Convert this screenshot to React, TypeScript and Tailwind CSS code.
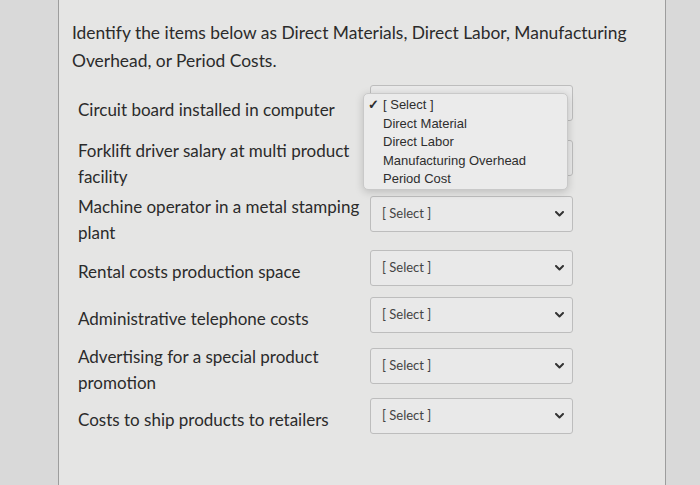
import React from "react";

const rows: { label: string[]; h: number; mt: number }[] = [
  { label: ["Circuit board installed in computer"], h: 55, mt: 12 },
  { label: ["Forklift driver salary at multi product", "facility"], h: 56, mt: -2 },
  { label: ["Machine operator in a metal stamping", "plant"], h: 54, mt: -2 },
  { label: ["Rental costs production space"], h: 47, mt: 9 },
  { label: ["Administrative telephone costs"], h: 51, mt: 9 },
  { label: ["Advertising for a special product", "promotion"], h: 50, mt: -4 },
  { label: ["Costs to ship products to retailers"], h: 40, mt: 9 },
];

function Chevron() {
  return (
    <svg width="9" height="6" viewBox="0 0 9 6" className="shrink-0">
      <path d="M1 1l3.5 3.5L8 1" fill="none" stroke="#333" strokeWidth="2" strokeLinecap="round" strokeLinejoin="round" />
    </svg>
  );
}

function SelectBox({ covered }: { covered: boolean }) {
  return (
    <div className="w-[203px] h-[36px] shrink-0 flex items-center justify-between pl-[11px] pr-[8px] border border-[#bdbdbd] rounded-[3px] bg-[#e9e9e9]">
      <span className={covered ? "invisible text-[13px]" : "text-[13px] text-[#444]"} style={{ fontFamily: "Lato, sans-serif" }}>
        [ Select ]
      </span>
      <Chevron />
    </div>
  );
}

export default function App() {
  const lato = { fontFamily: "Lato, 'Open Sans', sans-serif" };
  return (
    <div className="w-[700px] h-[485px] overflow-hidden bg-[#d9d9d9]">
      <div className="relative ml-[58px] w-[608px] h-full border-x border-[#9d9d9d] bg-[#e5e5e4] text-[#2b2b2b]" style={lato}>
        <div className="pt-[19px] pl-[13px] text-[17.4px] leading-[28px]">
          <p>Identify the items below as Direct Materials, Direct Labor, Manufacturing</p>
          <p>Overhead, or Period Costs.</p>
        </div>
        <div className="mt-[10px] flex flex-col">
          {rows.map((r, i) => (
            <div key={i} className="flex items-start" style={{ height: r.h }}>
              <div
                className="w-[311px] shrink-0 pl-[19px] text-[17px] leading-[26px] whitespace-nowrap"
                style={{ marginTop: r.mt }}
              >
                {r.label.map((l, j) => (
                  <div key={j}>{l}</div>
                ))}
              </div>
              <SelectBox covered={i < 2} />
            </div>
          ))}
        </div>

        <div
          className="absolute left-[304px] top-[93px] w-[205px] h-[97px] rounded-[5px] border border-[#c9c9c9] bg-[#ebebeb] shadow-[0_2px_8px_rgba(0,0,0,0.18)] pt-[2px]"
          style={{ fontFamily: "'Liberation Sans', Arial, sans-serif" }}
        >
          {["[ Select ]", "Direct Material", "Direct Labor", "Manufacturing Overhead", "Period Cost"].map((t, i) => (
            <div key={i} className="relative h-[18.5px] leading-[18.5px] pl-[19px] text-[13px] text-[#2e2e2e]">
              {i === 0 && <span className="absolute left-[4px] top-0 text-[13px] font-bold">✓</span>}
              {t}
            </div>
          ))}
        </div>
      </div>
    </div>
  );
}
